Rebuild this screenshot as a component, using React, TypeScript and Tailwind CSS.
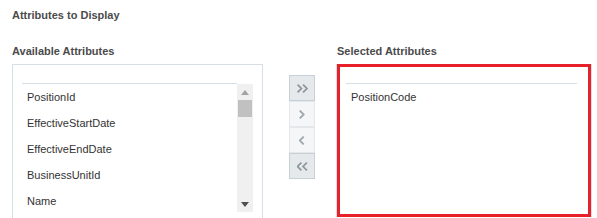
import React from "react";

const items = ["PositionId", "EffectiveStartDate", "EffectiveEndDate", "BusinessUnitId", "Name"];

function Chevron({ dir, double, color }: { dir: "right" | "left"; double?: boolean; color: string }) {
  const single = dir === "right" ? "M0.5 0.5 L4 4 L0.5 7.5" : "M4 0.5 L0.5 4 L4 7.5";
  return (
    <svg width={double ? 11 : 6} height="9" viewBox={double ? "0 0 10 8" : "0 0 5 8"} fill="none">
      <path d={single} stroke={color} strokeWidth="1.6" />
      {double && <path d={single} transform="translate(5 0)" stroke={color} strokeWidth="1.6" />}
    </svg>
  );
}

function Btn({ dir, double, enabled }: { dir: "right" | "left"; double?: boolean; enabled?: boolean }) {
  return (
    <div
      className={
        "w-[26px] h-[26px] flex items-center justify-center border " +
        (enabled ? "bg-[#e5e9ec] border-[#c7d0d7]" : "bg-[#f4f6f7] border-[#e4e8eb]")
      }
    >
      <Chevron dir={dir} double={double} color={enabled ? "#8d979f" : "#a0a8ae"} />
    </div>
  );
}

export default function App() {
  return (
    <div
      className="w-[597px] h-[218px] overflow-hidden bg-white text-[11px] text-[#333]"
      style={{ fontFamily: '"Liberation Sans", Arial, sans-serif' }}
    >
      <div className="pt-[8px] pl-[12px] leading-[14px] font-bold text-[#4b4b4b]">Attributes to Display</div>
      <div className="flex mt-[22px] pl-[12px]">
        {/* Available */}
        <div className="w-[251px] flex flex-col">
          <div className="leading-[14px] font-bold text-[#4b4b4b]">Available Attributes</div>
          <div className="mt-[6px] h-[170px] border border-[#d6dfe6] pt-[18px] pl-[9px] pr-[9px]">
            <div className="flex">
              <div className="w-[215px] border-t border-[#d6dfe6] pl-[5px]">
                {items.map((t) => (
                  <div key={t} className="h-[26px] leading-[26px] text-[#333]">
                    {t}
                  </div>
                ))}
              </div>
              <div className="mt-px w-[16px] h-[128px] bg-[#f0f0f0] flex flex-col items-center">
                <div className="h-[16px] flex items-center justify-center">
                  <svg width="8" height="5" viewBox="0 0 8 5">
                    <path d="M0 5 L4 0 L8 5 Z" fill="#a3a3a3" />
                  </svg>
                </div>
                <div className="w-[14px] h-[17px] bg-[#c1c1c1]" />
                <div className="flex-1" />
                <div className="h-[16px] flex items-center justify-center">
                  <svg width="8" height="5" viewBox="0 0 8 5">
                    <path d="M0 0 L8 0 L4 5 Z" fill="#505050" />
                  </svg>
                </div>
              </div>
            </div>
          </div>
        </div>
        {/* Buttons */}
        <div className="ml-[26px] mt-[31px] flex flex-col">
          <Btn dir="right" double enabled />
          <Btn dir="right" />
          <Btn dir="left" />
          <Btn dir="left" double enabled />
        </div>
        {/* Selected */}
        <div className="ml-[21px] flex flex-col">
          <div className="pl-px leading-[14px] font-bold text-[#4b4b4b]">Selected Attributes</div>
          <div className="relative mt-[6px] w-[256px] h-[153px] border border-[#d6dfe6] pt-[18px] pl-[9px] pr-[14px]">
            <div className="border-t border-[#d6dfe6] pl-[5px]">
              <div className="h-[26px] leading-[26px] text-[#333]">PositionCode</div>
            </div>
            <div className="absolute left-0 right-0 -top-px -bottom-px border-[3px] border-[#e8202a]" />
          </div>
        </div>
      </div>
    </div>
  );
}
